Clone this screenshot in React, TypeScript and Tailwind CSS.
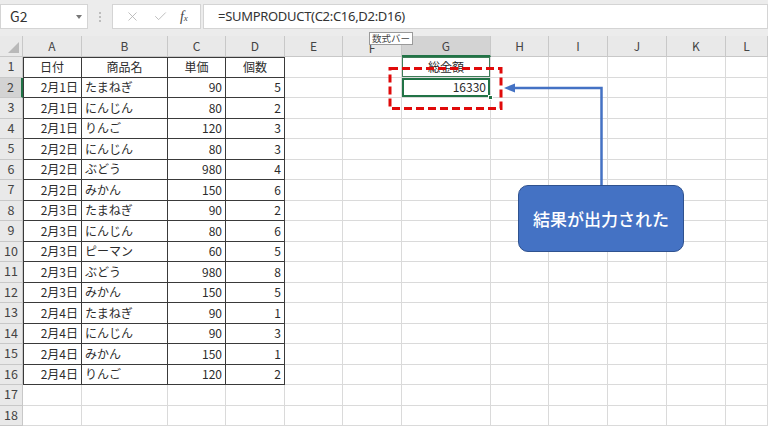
import { X, Check } from 'lucide-react';

const COLS = ['A', 'B', 'C', 'D', 'E', 'F', 'G', 'H', 'I', 'J', 'K', 'L'];

const DATA: [string, string, string, string][] = [
  ['日付', '商品名', '単価', '個数'],
  ['2月1日', 'たまねぎ', '90', '5'],
  ['2月1日', 'にんじん', '80', '2'],
  ['2月1日', 'りんご', '120', '3'],
  ['2月2日', 'にんじん', '80', '3'],
  ['2月2日', 'ぶどう', '980', '4'],
  ['2月2日', 'みかん', '150', '6'],
  ['2月3日', 'たまねぎ', '90', '2'],
  ['2月3日', 'にんじん', '80', '6'],
  ['2月3日', 'ピーマン', '60', '5'],
  ['2月3日', 'ぶどう', '980', '8'],
  ['2月3日', 'みかん', '150', '5'],
  ['2月4日', 'たまねぎ', '90', '1'],
  ['2月4日', 'にんじん', '90', '3'],
  ['2月4日', 'みかん', '150', '1'],
  ['2月4日', 'りんご', '120', '2'],
];

const font = "font-['Noto_Sans_CJK_JP','Noto_Sans',sans-serif]";

function Cell({ row, col }: { row: number; col: number }) {
  // row: 1-based sheet row, col: 0-based index into COLS
  const inTable = row <= 16 && col <= 3;
  const base = 'flex items-center px-[3px] border-r border-b overflow-visible whitespace-nowrap text-[12px] text-[#2b2b2b]';

  if (inTable) {
    const value = DATA[row - 1][col];
    const isHead = row === 1;
    let align = 'justify-start';
    if (isHead) align = 'justify-center';
    else if (col !== 1) align = 'justify-end';
    let shadow = '';
    if (row === 1 && col === 0) shadow = 'shadow-[inset_1px_1px_0_#3a3a3a]';
    else if (row === 1) shadow = 'shadow-[inset_0_1px_0_#3a3a3a]';
    else if (col === 0) shadow = 'shadow-[inset_1px_0_0_#3a3a3a]';
    return <div className={`${base} border-[#3a3a3a] ${align} ${shadow}`}>{value}</div>;
  }

  if (col === 6 && row === 1) {
    return (
      <div className={`${base} border-[#dadada] justify-center shadow-[inset_0_0_0_1px_#3f7d58]`}>総金額</div>
    );
  }
  if (col === 6 && row === 2) {
    return (
      <div className={`${base} border-[#dadada] justify-end pr-[4px] relative shadow-[inset_0_0_0_2px_#217346]`}>
        16330
        <span className="absolute right-[-3px] bottom-[-3px] w-[5px] h-[5px] bg-[#217346] border border-white" />
      </div>
    );
  }
  return <div className={`${base} border-[#dadada]`} />;
}

export default function App() {
  const rows = Array.from({ length: 18 }, (_, i) => i + 1);

  return (
    <div className={`relative w-[768px] h-[426px] overflow-hidden bg-white ${font}`}>
      {/* formula bar */}
      <div className="h-[36px] bg-[#ececec] flex items-start pt-[4px]">
        <div className="w-[88px] h-[25px] bg-white border border-[#d4d4d4] flex items-center justify-between pl-[9px] pr-[5px]">
          <span className="text-[14px] text-[#333]">G2</span>
          <span className="w-0 h-0 border-l-[3px] border-r-[3px] border-t-[4px] border-l-transparent border-r-transparent border-t-[#777]" />
        </div>
        <div className="w-[24px] h-[25px] flex flex-col items-center justify-center gap-[2px]">
          <span className="w-[2px] h-[2px] bg-[#bdbdbd]" />
          <span className="w-[2px] h-[2px] bg-[#bdbdbd]" />
          <span className="w-[2px] h-[2px] bg-[#bdbdbd]" />
        </div>
        <div className="w-[89px] h-[25px] bg-white border border-[#d4d4d4] flex items-center justify-around px-[6px]">
          <X size={15} strokeWidth={1.3} className="text-[#b0b0b0]" />
          <Check size={15} strokeWidth={1.3} className="text-[#b0b0b0]" />
          <span className="font-['Liberation_Serif',serif] italic text-[14px] text-[#444] leading-none">
            f<span className="text-[9px]">x</span>
          </span>
        </div>
        <div className="ml-[2px] flex-1 h-[25px] bg-white border border-[#d4d4d4] flex items-center pl-[14px]">
          <span className="font-['Noto_Sans',sans-serif] text-[13px] text-[#333] tracking-[-0.3px]">
            =SUMPRODUCT(C2:C16,D2:D16)
          </span>
        </div>
      </div>

      {/* sheet */}
      <div className="grid grid-cols-[23px_59px_86px_58px_59px_58px_59px_89px_58px_59px_59px_59px_1fr] grid-rows-[21px_repeat(18,20.5px)]">
        <div className="bg-[#e9e9e9] border-r border-b border-[#c8c8c8] flex items-end justify-end p-[3px]">
          <svg width="11" height="11" viewBox="0 0 11 11">
            <path d="M11 0 L11 11 L0 11 Z" fill="#b9b9b9" />
          </svg>
        </div>
        {COLS.map((c) => (
          <div
            key={c}
            className={
              c === 'G'
                ? 'bg-[#d3d3d3] border-r border-[#c8c8c8] border-b-2 border-b-[#217346] flex items-center justify-center text-[12px] text-[#444]'
                : c === 'F'
                  ? 'bg-[#e9e9e9] border-r border-b border-[#c8c8c8] flex items-end justify-center pb-[1px] text-[12px] leading-[14px] text-[#444]'
                  : 'bg-[#e9e9e9] border-r border-b border-[#c8c8c8] flex items-center justify-center text-[12px] text-[#444]'
            }
          >
            {c}
          </div>
        ))}
        {rows.map((r) => [
          <div
            key={`h${r}`}
            className={
              r === 2
                ? 'bg-[#d3d3d3] border-b border-[#c8c8c8] border-r-2 border-r-[#217346] flex items-center justify-center text-[12.5px] text-[#444]'
                : 'bg-[#e9e9e9] border-r border-b border-[#c8c8c8] flex items-center justify-center text-[12.5px] text-[#444]'
            }
          >
            {r}
          </div>,
          ...COLS.map((_, ci) => <Cell key={`${r}-${ci}`} row={r} col={ci} />),
        ])}
      </div>

      {/* tooltip */}
      <div className="absolute left-[369px] top-[32px] h-[13px] px-[2px] bg-white border border-[#9a9a9a] text-[9.5px] leading-[11px] text-[#444]">
        数式バー
      </div>

      {/* annotations */}
      <svg className="absolute left-0 top-0" width="768" height="426" viewBox="0 0 768 426">
        <rect x="390" y="68.5" width="111" height="40" fill="none" stroke="#e00a0a" strokeWidth="3" strokeDasharray="8 4" />
        <path d="M601.5 186 L601.5 88 L513 88" fill="none" stroke="#4472c4" strokeWidth="2.5" />
        <path d="M504 88 L515 83.5 L515 92.5 Z" fill="#4472c4" />
      </svg>

      {/* callout */}
      <div className="absolute left-[518px] top-[185px] w-[166px] h-[67px] rounded-[10px] bg-[#4472c4] border border-[#2f528f] flex items-center justify-center">
        <span className="text-white text-[17px] font-medium">結果が出力された</span>
      </div>
    </div>
  );
}
